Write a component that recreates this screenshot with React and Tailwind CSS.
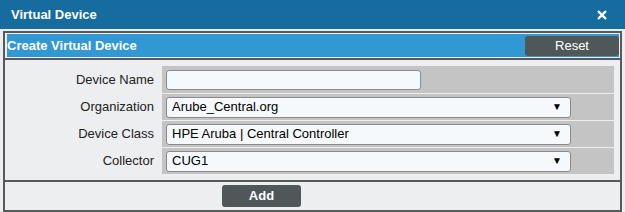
import { useState } from "react";

const fieldRows = [
  { label: "Device Name", type: "text" },
  { label: "Organization", type: "select", value: "Arube_Central.org" },
  { label: "Device Class", type: "select", value: "HPE Aruba | Central Controller" },
  { label: "Collector", type: "select", value: "CUG1" },
];

function SelectBox({ value }) {
  return (
    <div className="flex h-[21px] w-[405px] items-center justify-between rounded-[3px] border border-[#8a8a8a] bg-[#f5f9fb] pl-[5px] pr-[8px] text-[13px] text-black">
      <span>{value}</span>
      <span className="text-[10px] leading-none">▼</span>
    </div>
  );
}

export default function App() {
  const [name, setName] = useState("");

  return (
    <div
      className="flex h-[212px] w-[625px] flex-col bg-[#eceef0]"
      style={{ fontFamily: '"Liberation Sans", Arial, sans-serif' }}
    >
      <div className="flex h-[29px] shrink-0 items-center justify-between bg-[#166b9f] pl-[11px] pr-[18px] text-white">
        <span className="text-[13px] font-bold">Virtual Device</span>
        <svg viewBox="0 0 10 10" className="h-[10px] w-[10px]" stroke="white" strokeWidth="2.4">
          <path d="M1 1 9 9M9 1 1 9" />
        </svg>
      </div>

      <div className="flex flex-1 flex-col px-[3px] pt-[2px]">
        <div className="flex flex-1 flex-col border-2 border-[#58595b]">
          <div className="border-b-2 border-[#58595b] pb-px pl-[2px] pr-px pt-px">
            <div className="flex h-[23px] items-center justify-between bg-[#3198d4] pl-[0px]">
              <span className="text-[13px] font-bold text-white">Create Virtual Device</span>
              <button
                type="button"
                className="mb-[-1px] h-[20px] w-[94px] rounded-[3px] bg-[#4f5759] text-[13px] text-white"
              >
                Reset
              </button>
            </div>
          </div>

          <div className="border-b-2 border-[#58595b] py-[6px] pr-[6px]">
            {fieldRows.map((row, index) => (
              <div key={row.label} className="flex h-[27px]">
                <div className="flex w-[157px] items-center justify-end pr-[8px] text-[13px] text-[#222]">
                  {row.label}
                </div>
                <div
                  className={`flex flex-1 items-center bg-[#c4c4c4] pl-[4px] ${
                    index > 0 ? "border-t border-[#eceef0]" : ""
                  }`}
                >
                  {row.type === "text" ? (
                    <input
                      value={name}
                      onChange={(event) => setName(event.target.value)}
                      className="h-[20px] w-[255px] rounded-[3px] border border-[#8a8a8a] bg-[#f5f9fb] px-[5px] text-[13px] outline-none"
                    />
                  ) : (
                    <SelectBox value={row.value} />
                  )}
                </div>
              </div>
            ))}
          </div>

          <div className="flex flex-1 items-center pl-[217px]">
            <button
              type="button"
              className="h-[22px] w-[79px] rounded-[3px] bg-[#4f5759] text-[13px] font-bold text-white"
            >
              Add
            </button>
          </div>
        </div>
      </div>
    </div>
  );
}
